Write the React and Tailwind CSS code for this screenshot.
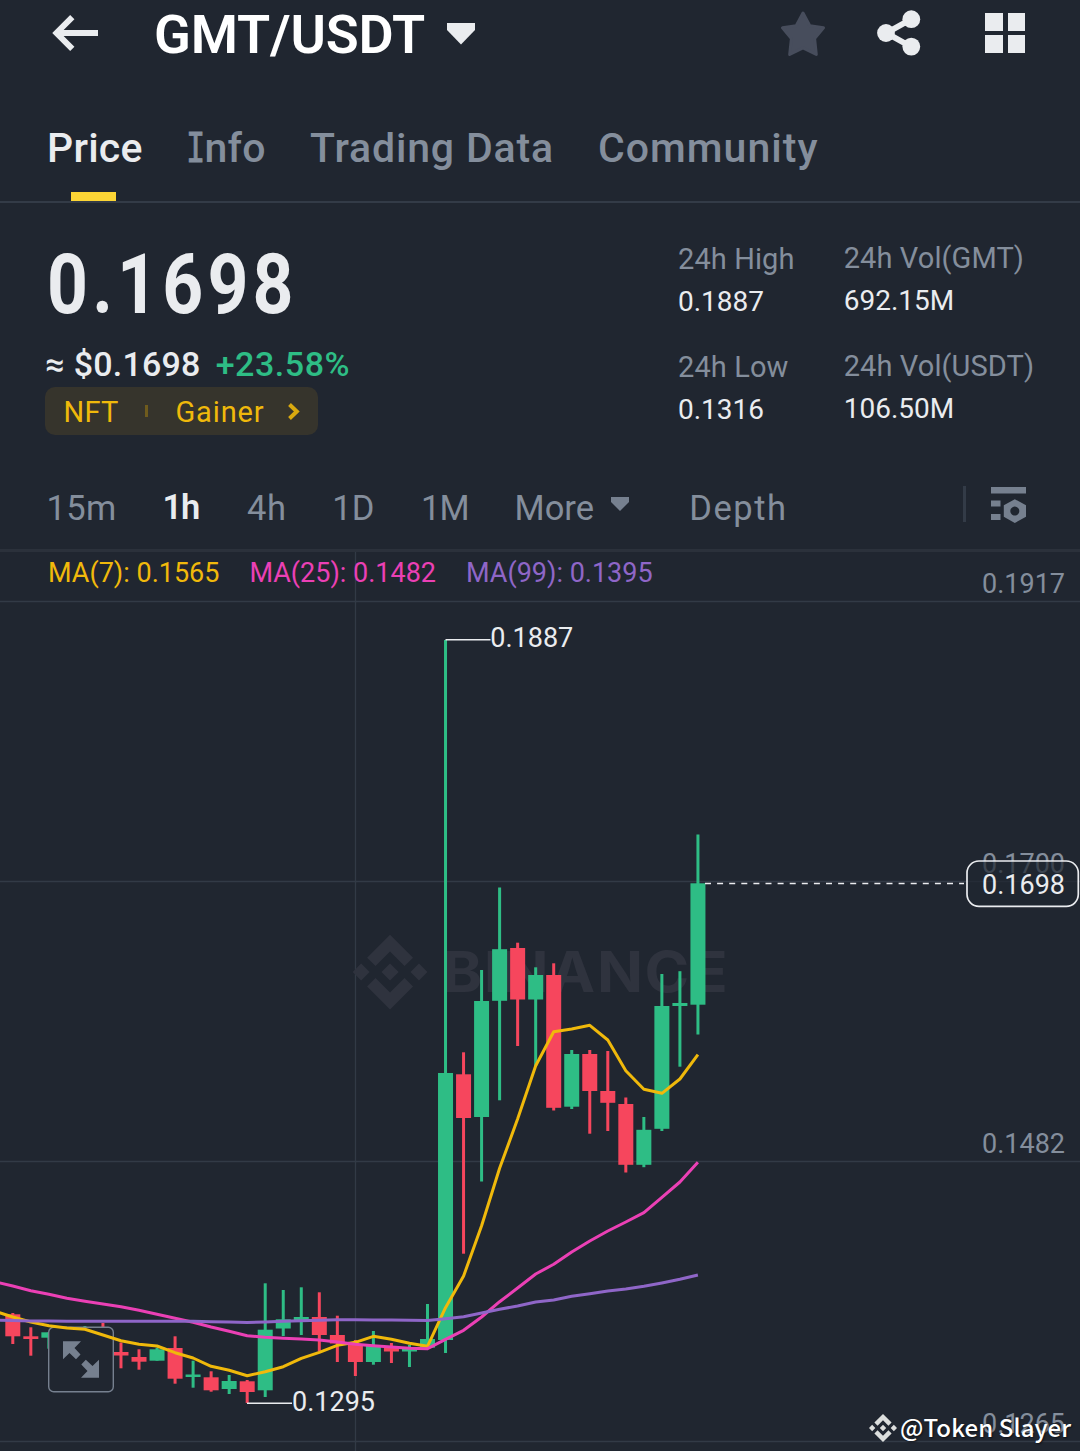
import React from "react";

const GREEN = "#2ebd85";
const RED = "#f6465d";

// [direction, wick top, body top, body bottom, wick bottom], one entry per hour
const CANDLES = [
  ["r", 1313, 1314.3, 1336.3, 1344],
  ["r", 1327.3, 1336.3, 1339, 1355.7],
  ["g", 1332.3, 1332.3, 1337.7, 1348.7],
  ["r", 1334, 1336, 1344, 1350],
  ["g", 1326, 1332, 1344, 1350],
  ["r", 1323, 1334, 1350, 1358],
  ["r", 1342.5, 1352, 1355.5, 1368.3],
  ["r", 1349.3, 1357, 1361.7, 1369.7],
  ["g", 1347.7, 1349.3, 1360.7, 1360.7],
  ["r", 1336.3, 1348, 1378.7, 1383.7],
  ["g", 1360.7, 1374.5, 1377, 1387.7],
  ["r", 1371.3, 1377.3, 1390.3, 1391.7],
  ["g", 1375, 1381, 1389, 1394],
  ["r", 1380, 1381.3, 1392, 1403],
  ["g", 1283.3, 1329.7, 1390.3, 1397],
  ["g", 1290, 1319.3, 1328.5, 1336],
  ["g", 1287.3, 1317, 1320, 1335],
  ["r", 1292.3, 1317, 1335, 1351.5],
  ["r", 1315.7, 1335, 1343.5, 1362],
  ["r", 1340, 1344, 1362, 1376],
  ["g", 1331, 1345, 1362, 1364.7],
  ["r", 1343, 1346.5, 1351.5, 1363],
  ["g", 1345, 1348.5, 1351.5, 1367],
  ["g", 1304, 1339, 1347.7, 1347.7],
  ["g", 640, 1073, 1340, 1353],
  ["r", 1052.3, 1074.3, 1118, 1253.7],
  ["g", 970, 1001, 1117, 1181.5],
  ["g", 887.5, 949.2, 1000.8, 1100.3],
  ["r", 942.7, 948, 999.5, 1046],
  ["g", 967.3, 975, 999.5, 1066],
  ["r", 963.3, 975, 1107.8, 1110.5],
  ["g", 1050, 1054, 1106.7, 1109],
  ["r", 1050, 1054, 1091, 1133.7],
  ["r", 1051, 1091, 1102.8, 1131],
  ["r", 1097.5, 1104, 1164.8, 1172.5],
  ["g", 1117, 1129.8, 1164.8, 1167.2],
  ["g", 974, 1006, 1128.8, 1131],
  ["g", 971.2, 1003, 1006, 1066.7],
  ["g", 834.5, 883.3, 1004.7, 1034.5],
];

const MA7 = [1317, 1322, 1325.7, 1328, 1329.3, 1335, 1340.7, 1344.3, 1346, 1352.7, 1358, 1366.3, 1370.3, 1375.7, 1371.7, 1366.7, 1358.3, 1352.3, 1345.3, 1342.3, 1336.3, 1339.3, 1343.3, 1346.3, 1307.7, 1276, 1225.7, 1168.3, 1119, 1065.7, 1031.7, 1029, 1025.3, 1040, 1070.7, 1089.3, 1093.3, 1079, 1054.7];
const MA25 = [1286, 1290.7, 1294.3, 1298.3, 1301.3, 1304, 1306.7, 1310.3, 1314.3, 1318.3, 1322.3, 1327, 1331.3, 1335.7, 1337.3, 1338.3, 1339, 1340, 1342, 1344.3, 1345.7, 1347, 1348.3, 1348.7, 1339.3, 1330.3, 1317, 1301.7, 1288, 1274, 1264.3, 1252, 1241, 1231, 1222, 1212.7, 1197.3, 1182, 1162.3];
const MA99 = [1320.5, 1321, 1321, 1321.2, 1321.2, 1321.2, 1321.3, 1321.3, 1321.3, 1321.3, 1321.3, 1321.7, 1322, 1322.4, 1322, 1321.2, 1320.7, 1320.2, 1319.8, 1319.7, 1319.9, 1320, 1320.3, 1320.6, 1318.7, 1316.7, 1313, 1309.3, 1306, 1302, 1300, 1296.3, 1293.7, 1291, 1289, 1286.3, 1283, 1279.3, 1275];

const cx = (i) => 12.8 + i * 18.03;
const linePoints = (start, values) =>
  `-1,${start} ` + values.map((y, i) => `${cx(i).toFixed(1)},${y}`).join(" ");

const LOGO =
  "M38.73 53.2 63.32 28.62l24.6 24.6 14.3-14.31L63.32 0 24.42 38.9zM0 63.31 14.3 49.01 28.61 63.32 14.31 77.62zM38.73 73.41 63.32 98l24.6-24.6 14.31 14.29-38.91 38.92-38.91-38.88zM98 63.31 112.3 49.01 126.61 63.31 112.3 77.63zM77.83 63.3 63.32 48.78 48.78 63.3 63.32 77.83z";

function Header() {
  return (
    <header className="flex h-[71px] items-start pl-[52px] pr-[55px]">
      <svg className="mt-[15px] h-9 w-[46px] shrink-0" viewBox="0 0 46 36" fill="none" stroke="#eaecef">
        <path d="M46 18H4" strokeWidth="6" />
        <path d="M20.3 2.2 4.5 18l15.8 15.8" strokeWidth="6" />
      </svg>
      <h1 className="ml-[56px] w-[271px] whitespace-nowrap text-[54px] font-semibold leading-[70px] tracking-[-0.16px] text-white">
        GMT/USDT
      </h1>
      <svg className="ml-[22px] mt-[23px] h-[22px] w-7" viewBox="0 0 28 22" fill="#eaecef">
        <path d="M0 0h28v7L14 21.5 0 7z" />
      </svg>
      <div className="ml-auto flex items-start">
        <svg className="mt-[11px] h-[46px] w-[46px]" viewBox="0 0 46 46" fill="#474d5c" stroke="#474d5c" strokeWidth="3" strokeLinejoin="round">
          <path d="M23 2 29.8 14.8 43.5 16.8 34.6 27.5 36.3 43.5 23 36.8 9.7 43.5 11.4 27.5 2.5 16.8 16.2 14.8z" />
        </svg>
        <svg className="ml-[51px] mt-[10px] h-[46px] w-[44px]" viewBox="0 0 44 46" fill="#eaecef">
          <path d="M34.5 9 9.5 23l25 14" fill="none" stroke="#eaecef" strokeWidth="6" />
          <circle cx="9" cy="23" r="8.9" />
          <circle cx="34.3" cy="9.2" r="8.9" />
          <circle cx="34.3" cy="36.6" r="8.9" />
        </svg>
        <div className="ml-[64px] mt-[13px] grid h-10 w-10 grid-cols-2 gap-x-[5px] gap-y-1">
          <span className="bg-[#eaecef]" />
          <span className="bg-[#eaecef]" />
          <span className="bg-[#eaecef]" />
          <span className="bg-[#eaecef]" />
        </div>
      </div>
    </header>
  );
}

function Tabs() {
  return (
    <nav className="flex h-[132px] items-start whitespace-nowrap border-b-2 border-[#333b47] pl-[47px] pt-[47px] text-[41px] font-medium leading-[60px] text-[#848e9c]">
      <div className="flex w-[139px] flex-col text-[#eaecef]">
        <span className="tracking-[0.25px]">Price</span>
        <span className="ml-6 mt-[14px] h-[9px] w-[45px] bg-[#fcd535]" />
      </div>
      <span className="h-[60px] w-[124px] tracking-[0.2px]">
        <span className="inline-block w-[18.5px] origin-left scale-x-[0.8] font-['DejaVu_Sans_Mono',monospace] text-[40px] font-normal leading-none [-webkit-text-stroke:0.8px_#848e9c]">I</span>nfo
      </span>
      <span className="w-[288px] tracking-[0.84px]">Trading Data</span>
      <span className="tracking-[1.04px]">Community</span>
    </nav>
  );
}

function Stat({ label, value }) {
  return (
    <div className="flex flex-col gap-2">
      <span className="text-[29px] leading-[34px] tracking-[0.1px] text-[#848e9c]">{label}</span>
      <span className="pt-px text-[28px] font-[450] leading-[33px] text-[#eaecef]">{value}</span>
    </div>
  );
}

function Summary() {
  return (
    <section className="flex h-[275px] items-start whitespace-nowrap pl-[45px]">
      <div className="flex w-[633px] flex-col pt-10">
        <div className="ml-0.5 origin-left scale-x-[0.86] text-[83px] font-bold leading-[84px] tracking-[4.9px] text-[#eaecef]">
          0.1698
        </div>
        <div className="mb-px mt-[17px] flex text-[34px] font-medium leading-10 text-[#eaecef]">
          <span className="w-[28.7px]">≈</span>
          <span className="w-[142px] tracking-[0.2px]">$0.1698</span>
          <span className="tracking-[0.55px] text-[#2ebd85]">+23.58%</span>
        </div>
        <div className="mt-0.5 flex h-12 w-[273px] items-center rounded-[10px] bg-[#36342c] pl-[18.4px] text-[29px] leading-[48px] text-[#f0b90b]">
          <span className="w-[82px] pt-[2px] tracking-[0.3px]">NFT</span>
          <span className="h-3 w-[3px] bg-[#6f5b1d]" />
          <span className="ml-[27px] w-[113px] pt-[2px] tracking-[0.9px]">Gainer</span>
          <svg className="h-[17px] w-3" viewBox="0 0 12 17" fill="none" stroke="#d9a90f" strokeWidth="4">
            <path d="M1.5 1.5 8.8 8.5l-7.3 7" />
          </svg>
        </div>
      </div>
      <div className="flex w-[165.7px] flex-col gap-8 pt-[39px]">
        <Stat label="24h High" value="0.1887" />
        <Stat label="24h Low" value="0.1316" />
      </div>
      <div className="flex flex-col gap-8 pt-[38px]">
        <Stat label="24h Vol(GMT)" value="692.15M" />
        <Stat label="24h Vol(USDT)" value="106.50M" />
      </div>
    </section>
  );
}

function Intervals() {
  return (
    <div className="flex h-[74px] items-start whitespace-nowrap border-b-[3px] border-[#2b313b] pl-[46.5px] text-[34.5px] leading-[60px] text-[#848e9c]">
      <span className="w-[116px] tracking-[0.3px]">15m</span>
      <span className="-mt-px w-[84.6px] font-semibold tracking-[-1.2px] text-[#eaecef]">1h</span>
      <span className="w-[85.2px] tracking-[0.4px]">4h</span>
      <span className="w-[88.8px] tracking-[0.2px]">1D</span>
      <span className="w-[93.5px] tracking-[-1px]">1M</span>
      <span className="w-[96.4px]">More</span>
      <svg className="mt-[19px] h-[14px] w-[18px]" viewBox="0 0 18 14" fill="#76808f">
        <path d="M0 0h18v5L9 14 0 5z" />
      </svg>
      <span className="ml-[60.4px] w-[273.6px] tracking-[1.5px]">Depth</span>
      <span className="mt-2 h-9 w-[3px] bg-[#333b47]" />
      <svg className="ml-[25px] mt-[9px] h-9 w-[35px]" viewBox="0 0 35 36" fill="#76808f">
        <path d="M0 0h35v6.5H0zM0 13.6h9.5v6H0zM0 27h9.5v6H0z" />
        <path fillRule="evenodd" d="M23.8 12.2 35 18.3v11.4L23.8 36l-11-6.3V18.3zM23.8 19.6a4.5 4.5 0 1 0 .01 0z" />
      </svg>
    </div>
  );
}

function Chart() {
  return (
    <section className="relative h-[899px] overflow-hidden">
      <svg className="block h-[899px] w-[1080px]" viewBox="0 552 1080 899" fontFamily="Roboto, sans-serif" fontSize="27">
        <g stroke="#323a46" strokeWidth="1.3">
          <path d="M0 601.5H1080M0 881.5H1080M0 1161.5H1080M0 1441.5H1080M355.5 552V1451" />
        </g>

        <g fill="#2f333e">
          <path transform="translate(352.7 934.7) scale(0.59)" d={LOGO} />
          <text transform="translate(442.2 992) scale(1.08 1)" fontFamily="Inter, sans-serif" fontWeight="700" fontSize="56" letterSpacing="1.5">
            BINANCE
          </text>
        </g>

        <g fill="#848e9c">
          <text x="982" y="592.7">0.1917</text>
          <text x="982" y="872.7">0.1700</text>
          <text x="982" y="1152.7">0.1482</text>
          <text x="982" y="1432.7">0.1265</text>
        </g>

        {CANDLES.map(([dir, high, top, bottom, low], i) => (
          <g key={i} fill={dir === "g" ? GREEN : RED}>
            <rect x={cx(i) - 1.5} y={high} width="3" height={low - high} />
            <rect x={cx(i) - 7.5} y={top} width="15" height={bottom - top} />
          </g>
        ))}

        <rect x="48.7" y="1327.2" width="64.6" height="64.6" rx="5" fill="#202630" stroke="#76808f" strokeWidth="1.4" />
        <path
          fill="#76808f"
          d="M63 1341.3H81L74.5 1348 80.5 1354.5 76 1359.3 69.5 1353 63 1359.3ZM99 1377.7H81L87.5 1371 81.3 1364.5 85.8 1359.7 92.5 1366 99 1359.7Z"
        />

        <g fill="none" strokeWidth="3" strokeLinejoin="round">
          <polyline stroke="#f0b90b" points={linePoints(1312.5, MA7)} />
          <polyline stroke="#eb40b5" points={linePoints(1282.7, MA25)} />
          <polyline stroke="#8f66c8" points={linePoints(1320.3, MA99)} />
        </g>

        <g stroke="#eaecef" strokeWidth="1.5">
          <path d="M445.5 639.7H490.5M247 1403.3H292" />
          <path d="M705 883.5H964" strokeDasharray="6 6.1" />
        </g>
        <rect x="967" y="861" width="111.3" height="45.3" rx="12" fill="#202630" fillOpacity="0.7" stroke="#eaecef" strokeWidth="1.7" />
        <g fill="#eaecef">
          <text x="982" y="893.5">0.1698</text>
          <text x="490.3" y="646.7">0.1887</text>
          <text x="292" y="1411">0.1295</text>
        </g>
      </svg>

      <div className="absolute left-[48px] top-px flex whitespace-nowrap text-[27px] leading-[41px]">
        <span className="w-[201.4px] text-[#f0b90b]">MA(7): 0.1565</span>
        <span className="w-[216.6px] text-[#eb40b5]">MA(25): 0.1482</span>
        <span className="text-[#8f66c8]">MA(99): 0.1395</span>
      </div>

      <div className="absolute bottom-[6px] left-[869px] flex items-center gap-[3px] whitespace-nowrap font-['Noto_Sans_CJK_SC',sans-serif] text-[24px] font-medium leading-[36px] text-white [text-shadow:1px_1px_2px_rgba(0,0,0,0.6)]">
        <svg className="h-7 w-7" viewBox="0 0 126.61 126.61" fill="#dcdedd">
          <path d={LOGO} />
        </svg>
        <span className="-mt-0.5 tracking-[0.1px]">@Token Slayer</span>
      </div>
    </section>
  );
}

export default function App() {
  return (
    <main className="h-[1451px] w-[1080px] overflow-hidden bg-[#202630] font-['Roboto',sans-serif]">
      <Header />
      <Tabs />
      <Summary />
      <Intervals />
      <Chart />
    </main>
  );
}
